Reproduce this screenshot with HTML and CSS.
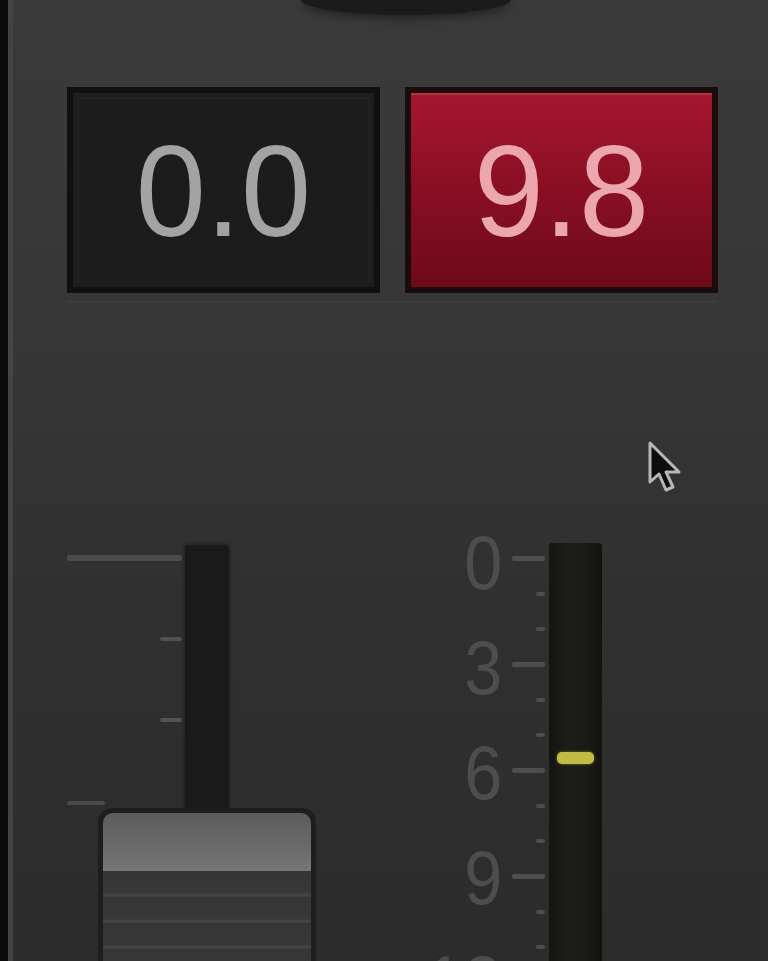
FILE: index.html
```html
<!DOCTYPE html>
<html>
<head>
<meta charset="utf-8">
<link rel="stylesheet" href="styles.css">
</head>
<body>
<div class="strip">
  <div class="edge-black"></div>
  <div class="edge-line"></div>
  <div class="panel">
    <div class="knob"></div>
    <div class="readouts">
      <div class="readout readout-dark"><span>0.0</span></div>
      <div class="readout readout-red"><span>9.8</span></div>
    </div>
    <div class="sep"></div>
    <div class="controls">
      <div class="fader">
        <div class="fader-scale">
          <div class="fs-top"></div>
          <div class="fs-tick"></div>
          <div class="fs-tick"></div>
          <div class="fs-bottom"></div>
        </div>
        <div class="fader-track"></div>
        <div class="fader-cap">
          <div class="cap-top"></div>
          <div class="cap-grip"></div>
        </div>
      </div>
      <div class="meter">
        <div class="meter-nums">
          <span>0</span><span>3</span><span>6</span><span>9</span><span>12</span>
        </div>
        <div class="meter-ticks">
          <i class="major"></i><i></i><i></i>
          <i class="major"></i><i></i><i></i>
          <i class="major"></i><i></i><i></i>
          <i class="major"></i><i></i><i></i>
        </div>
        <div class="meter-bar">
          <div class="meter-peak"></div>
        </div>
      </div>
    </div>
  </div>
</div>
<svg class="cursor" width="40" height="60" viewBox="0 0 40 60">
  <path d="M4 3 L4 42 L13 34 L20 50 L27 47 L20 32 L33 32 Z" fill="#0d0d0d" stroke="#b8b8b8" stroke-width="3" stroke-linejoin="round"/>
</svg>
</body>
</html>
```
FILE: styles.css
```css
html, body {
  margin: 0;
  padding: 0;
}
body {
  width: 768px;
  height: 961px;
  overflow: hidden;
  background: #2d2d2d;
  font-family: "Liberation Sans", Arial, sans-serif;
  position: relative;
}
.strip {
  display: flex;
  height: 961px;
  overflow: hidden;
}
.edge-black {
  width: 8px;
  flex-shrink: 0;
  background: #0b0b0b;
}
.edge-line {
  width: 5px;
  flex-shrink: 0;
  background: #444444;
}
.panel {
  flex: 1;
  background: linear-gradient(#3a3a3a 0px, #373737 300px, #303030 600px, #2c2c2c 961px);
  display: flex;
  flex-direction: column;
  padding-left: 54px;
  overflow: hidden;
}
.panel > * {
  flex-shrink: 0;
}
.knob {
  width: 210px;
  height: 15px;
  margin-left: 234px;
  background: #1b1b1b;
  border-radius: 0 0 50% 50% / 0 0 100% 100%;
  box-shadow: 0 3px 10px rgba(0,0,0,0.45);
}
.readouts {
  display: flex;
  gap: 25px;
  margin-top: 72px;
}
.readout {
  width: 313px;
  height: 206px;
  box-sizing: border-box;
  display: flex;
  align-items: center;
  justify-content: center;
  font-size: 130px;
  line-height: 1;
}
.readout span {
  display: block;
  transform: translateY(1px) scaleX(0.97);
}
.readout-dark {
  background: #1c1c1c;
  border: 6px solid #101010;
  box-shadow: inset 0 0 0 5px #1e1e1e, inset 0 0 0 6px #252525;
  color: #a3a3a3;
}
.readout-red {
  background: linear-gradient(#a5172f 0%, #8c0f24 45%, #6c0a1a 100%);
  border: 6px solid #1a0b0d;
  box-shadow: inset 0 2px 0 rgba(255,120,140,0.25);
  color: #eba7ad;
}
.sep {
  height: 2px;
  width: 650px;
  margin-top: 8px;
  background: #3d3d3d;
}
.controls {
  display: flex;
  margin-top: 227px;
  height: 431px;
}
.fader {
  position: relative;
  display: flex;
  gap: 3px;
  padding-top: 15px;
  width: 245px;
  flex-shrink: 0;
  height: 416px;
}
.fader-scale {
  width: 115px;
  display: flex;
  flex-direction: column;
  align-items: flex-end;
}
.fs-top {
  width: 115px;
  height: 6px;
  margin-top: 10px;
  background: #4b4b4b;
  border-radius: 2px;
}
.fs-tick {
  width: 22px;
  height: 4px;
  margin-top: 76px;
  background: #525252;
  border-radius: 2px;
}
.fs-tick + .fs-tick {
  margin-top: 77px;
}
.fs-bottom {
  align-self: flex-start;
  width: 38px;
  height: 4px;
  margin-top: 79px;
  background: #4a4a4a;
  border-radius: 2px;
}
.fader-track {
  width: 44px;
  background: #1a1a1a;
  border-radius: 3px 3px 0 0;
  box-shadow: 0 0 4px rgba(0,0,0,0.5);
}
.fader-cap {
  position: absolute;
  left: 31px;
  top: 278px;
  width: 218px;
  height: 160px;
  box-sizing: border-box;
  border: 5px solid #1e1e1e;
  border-bottom: none;
  border-radius: 14px 14px 0 0;
  overflow: hidden;
  display: flex;
  flex-direction: column;
}
.cap-top {
  height: 58px;
  background: linear-gradient(#5c5c5c, #6a6a6a 60%, #777777);
  border-radius: 10px 10px 0 0;
}
.cap-grip {
  flex: 1;
  background: repeating-linear-gradient(#353535 0px, #383838 22px, #474747 24px, #3c3c3c 26px);
}
.meter {
  display: flex;
  margin-left: 146px;
  flex-shrink: 0;
}
.meter-nums {
  width: 44px;
  display: flex;
  flex-direction: column;
  align-items: flex-end;
  font-size: 76px;
  line-height: 105px;
  color: #4d4d4d;
  margin-top: -20px;
}
.meter-nums span {
  display: block;
  height: 105px;
  flex-shrink: 0;
  transform: scaleX(0.9);
  transform-origin: right center;
}
.meter-ticks {
  width: 36px;
  margin-left: 7px;
  display: flex;
  flex-direction: column;
  align-items: flex-end;
  padding-top: 26px;
  gap: 31px;
}
.meter-ticks i {
  display: block;
  width: 9px;
  height: 4px;
  background: #4e4e4e;
  border-radius: 2px;
}
.meter-ticks i.major {
  width: 33px;
  height: 5px;
}
.meter-bar {
  width: 53px;
  margin-left: 4px;
  margin-top: 13px;
  background: linear-gradient(90deg, #141411, #1d1d18 40%, #1b1b16 70%, #121210);
  border-radius: 3px 3px 0 0;
  position: relative;
}
.meter-peak {
  position: absolute;
  left: 8px;
  top: 209px;
  width: 37px;
  height: 12px;
  border-radius: 5px;
  background: #c2bb45;
  box-shadow: 0 0 3px rgba(190,180,60,0.6);
}
.cursor {
  position: absolute;
  left: 646px;
  top: 440px;
}
```
